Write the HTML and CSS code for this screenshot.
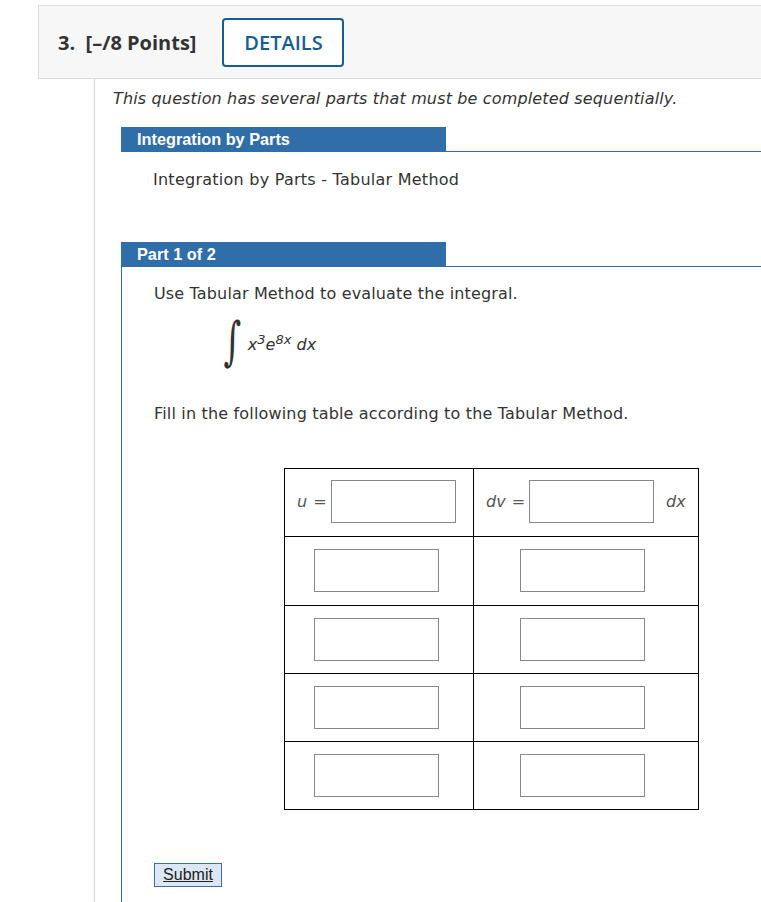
FILE: index.html
```html
<!DOCTYPE html>
<html>
<head>
<meta charset="utf-8">
<link rel="stylesheet" href="styles.css">
</head>
<body>
<div class="qhead">
  <span class="qnum">3.&nbsp; [–/8 Points]</span>
  <button class="details">DETAILS</button>
</div>
<div class="qbody">
  <p class="intro">This question has several parts that must be completed sequentially.</p>
  <div class="section first">
    <div class="sec-head"><div class="bar">Integration by Parts</div></div>
    <p class="sec-text">Integration by Parts - Tabular Method</p>
  </div>
  <div class="section part">
    <div class="sec-head"><div class="bar">Part 1 of 2</div></div>
    <div class="part-body">
      <p class="line1">Use Tabular Method to evaluate the integral.</p>
      <div class="integral">
        <span class="int-sign">∫</span>
        <span class="expr">x<sup>3</sup>e<sup>8x</sup> dx</span>
      </div>
      <p class="line2">Fill in the following table according to the Tabular Method.</p>
      <table class="tab">
        <tr>
          <td class="c1"><span class="lbl">u</span><span class="eq">=</span><span class="box"></span></td>
          <td class="c2"><span class="lbl">dv</span><span class="eq">=</span><span class="box"></span><span class="lbl dx">dx</span></td>
        </tr>
        <tr><td class="c1 ctr"><span class="box"></span></td><td class="c2 ctr"><span class="box"></span></td></tr>
        <tr><td class="c1 ctr"><span class="box"></span></td><td class="c2 ctr"><span class="box"></span></td></tr>
        <tr><td class="c1 ctr"><span class="box"></span></td><td class="c2 ctr"><span class="box"></span></td></tr>
        <tr><td class="c1 ctr"><span class="box"></span></td><td class="c2 ctr"><span class="box"></span></td></tr>
      </table>
      <button class="submit">Submit</button>
    </div>
  </div>
</div>
</body>
</html>
```
FILE: styles.css
```css
html, body {
  margin: 0;
  padding: 0;
  background: #fff;
  height: 100%;
}
body {
  font-family: "DejaVu Sans", Verdana, "Open Sans", sans-serif;
  color: #333;
  overflow: hidden;
}
.qhead {
  margin: 5px 0 0 38px;
  height: 72px;
  border: 1px solid #dcdcdc;
  border-right: none;
  background: #f7f7f7;
  display: flex;
  align-items: center;
  padding-left: 19px;
}
.qnum {
  font-family: "Open Sans", sans-serif;
  font-weight: 700;
  font-size: 20px;
  color: #333;
}
.details {
  margin-left: 26px;
  width: 122px;
  height: 49px;
  border: 2px solid #145e94;
  border-radius: 4px;
  background: #fff;
  color: #145e94;
  font-family: "Open Sans", sans-serif;
  font-weight: 600;
  font-size: 20px;
  padding: 0;
}
.qbody {
  margin-left: 94px;
  border-left: 1px solid #d4d4d4;
  height: calc(100vh - 79px);
  padding-top: 1px;
  box-sizing: border-box;
  display: flex;
  flex-direction: column;
}
.intro {
  margin: 9px 0 0 18px;
  font-style: italic;
  font-size: 16px;
  letter-spacing: 0.15px;
  line-height: 20px;
}
.section {
  margin-left: 26px;
}
.sec-head {
  border-bottom: 1px solid #2f6ea8;
}
.bar {
  width: 309px;
  height: 24px;
  line-height: 24px;
  background: #2f6ea8;
  color: #fff;
  font-family: "Liberation Sans", Arial, sans-serif;
  font-weight: 700;
  font-size: 16.3px;
  padding-left: 16px;
}
.first {
  margin-top: 18px;
}
.sec-text {
  margin: 18px 0 0 32px;
  font-size: 16px;
  letter-spacing: 0.25px;
  line-height: 20px;
}
.part {
  margin-top: 52px;
  flex: 1;
  display: flex;
  flex-direction: column;
}
.part-body {
  border-left: 1px solid #2f6ea8;
  padding-left: 32px;
  flex: 1;
}
.line1 {
  margin: 0;
  padding-top: 17px;
  font-size: 16px;
  letter-spacing: 0.15px;
  line-height: 20px;
}
.integral {
  margin: 13px 0 0 68px;
  display: flex;
  align-items: center;
  height: 48px;
}
.int-sign {
  font-family: "DejaVu Serif", serif;
  font-size: 40px;
  line-height: 48px;
  font-style: italic;
  font-weight: 300;
  color: #333;
  transform: scaleY(1.3) scaleX(0.85);
}
.expr {
  margin-left: 5px;
  font-style: italic;
  font-size: 16px;
  padding-top: 6px;
}
.expr sup {
  font-size: 13px;
  vertical-align: 6px;
  line-height: 0;
}
.line2 {
  margin: 39px 0 0 0;
  font-size: 16px;
  letter-spacing: 0.17px;
  line-height: 20px;
}
.tab {
  margin: 44px 0 0 130px;
  border-collapse: collapse;
}
.tab td {
  border: 1px solid #000;
  height: 68.3px;
  padding: 0 0 3px 0;
  box-sizing: border-box;
  vertical-align: middle;
  font-size: 16px;
}
.c1 { width: 189px; }
.c2 { width: 225px; }
.ctr.c1 { text-align: center; padding-right: 6px; }
.ctr.c2 { text-align: center; padding-right: 8px; }
.tab tr:not(:first-child) td { padding-bottom: 0; }
.box {
  display: inline-block;
  width: 123px;
  height: 41px;
  border: 1px solid #888;
  vertical-align: middle;
  background: #fff;
}
.lbl {
  font-style: italic;
  color: #555;
  vertical-align: middle;
}
.eq {
  color: #555;
  vertical-align: middle;
  margin: 0 4px 0 6px;
}
.c1 .lbl { margin-left: 12px; }
.c2 > .lbl:first-child { margin-left: 12px; }
.dx { margin-left: 12px; }
.submit {
  display: block;
  margin-top: 53px;
  width: 68px;
  height: 24px;
  padding: 0;
  background: #dce7f3;
  border: 1px solid #3b6ea5;
  font-family: "Liberation Sans", Arial, sans-serif;
  font-size: 16px;
  color: #222;
  text-decoration: underline;
}
```
